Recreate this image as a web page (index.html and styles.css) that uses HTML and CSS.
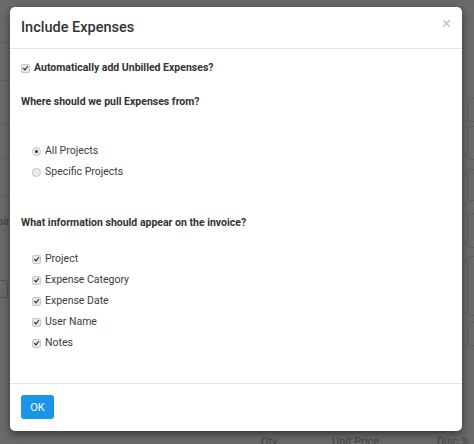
FILE: index.html
```html
<!DOCTYPE html>
<html lang="en">
<head>
    <meta charset="UTF-8">
    <meta name="viewport" content="width=device-width, initial-scale=1.0">
    <title>Include Expenses</title>
    <link rel="stylesheet" href="styles.css">
</head>
<body>
    <!-- Invoice page behind the dimmed backdrop -->
    <div class="page">
        <div class="page-left">
            <div class="rule r1"></div>
            <div class="rule r2"></div>
            <div class="rule r3"></div>
            <div class="rule r4"></div>
            <div class="rule r5"></div>
            <div class="page-label">Poir</div>
            <div class="page-input"></div>
        </div>
        <div class="page-right">
            <div class="field f1"></div>
            <div class="field f2"></div>
            <div class="field f3"></div>
            <div class="field f4"></div>
            <div class="field f5"></div>
            <div class="field f6"></div>
        </div>
        <div class="page-columns">
            <span class="col-qty">Qty</span>
            <span class="col-price">Unit Price</span>
            <span class="col-disc">Disc %</span>
        </div>
    </div>

    <div class="modal">
        <div class="modal-header">
            <h2>Include Expenses</h2>
            <span class="close">&times;</span>
        </div>

        <div class="modal-body">
            <label class="check-row bold">
                <span class="box checked"></span>
                Automatically add Unbilled Expenses?
            </label>

            <p class="question q-source">Where should we pull Expenses from?</p>

            <div class="options radios">
                <label class="check-row">
                    <span class="dot selected"></span>
                    All Projects
                </label>
                <label class="check-row">
                    <span class="dot"></span>
                    Specific Projects
                </label>
            </div>

            <p class="question q-fields">What information should appear on the invoice?</p>

            <div class="options fields" id="fieldList"></div>
        </div>

        <div class="modal-footer">
            <button class="btn-ok">OK</button>
        </div>
    </div>

    <script>
        const fields = ['Project', 'Expense Category', 'Expense Date', 'User Name', 'Notes'];
        const fieldList = document.getElementById('fieldList');

        fields.forEach(name => {
            const row = document.createElement('label');
            row.className = 'check-row';
            row.innerHTML = `<span class="box checked"></span>${name}`;
            fieldList.appendChild(row);
        });
    </script>
</body>
</html>
```

FILE: styles.css
```css
html, body {
    margin: 0;
    padding: 0;
    height: 100%;
    overflow: hidden;
}

body {
    font-family: Roboto, "Liberation Sans", Arial, sans-serif;
    background-color: #6a6a6a;
    color: #333;
}

/* dimmed page */
.page {
    position: relative;
    height: 444px;
}

.page-left .rule {
    position: absolute;
    left: 0;
    width: 12px;
    height: 1px;
    background: #5f5f5f;
}

.r1 { top: 42px; }
.r2 { top: 80px; }
.r3 { top: 123px; }
.r4 { top: 158px; }
.r5 { top: 195px; }

.page-label {
    position: absolute;
    left: -10px;
    top: 215px;
    font-size: 11px;
    color: #3a3a3a;
}

.page-input {
    position: absolute;
    left: -4px;
    top: 280px;
    width: 10px;
    height: 16px;
    border: 1px solid #555;
    border-radius: 3px;
}

.page-right .field {
    position: absolute;
    left: 467px;
    width: 12px;
    border: 1px solid #5c5c5c;
    border-radius: 3px;
}

.f1 { top: 98px; height: 22px; }
.f2 { top: 126px; height: 32px; }
.f3 { top: 169px; height: 30px; }
.f4 { top: 213px; height: 33px; }
.f5 { top: 256px; height: 58px; }
.f6 { top: 322px; height: 22px; }

.page-columns {
    position: absolute;
    top: 435px;
    left: 0;
    width: 100%;
    font-size: 11px;
    color: #444;
}

.page-columns span {
    position: absolute;
}

.col-qty { left: 261px; }
.col-price { left: 332px; }
.col-disc { left: 437px; }

/* modal */
.modal {
    position: absolute;
    top: 7px;
    left: 10px;
    width: 452px;
    background: #fff;
    border-radius: 5px;
    box-shadow: 0 3px 9px rgba(0, 0, 0, 0.5);
}

.modal-header {
    display: flex;
    align-items: center;
    justify-content: space-between;
    height: 41px;
    padding: 0 11px;
    border-bottom: 1px solid #e5e5e5;
}

.modal-header h2 {
    margin: 0;
    font-size: 14.5px;
    font-weight: 500;
    color: #333;
    line-height: 20px;
}

.close {
    font-size: 17px;
    line-height: 20px;
    color: #c4c4c4;
    margin-top: -9px;
    margin-right: 0;
}

.modal-body {
    padding: 9px 11px 30px;
    font-size: 10.5px;
}

.check-row {
    display: flex;
    align-items: center;
    gap: 4px;
    height: 20px;
    line-height: 20px;
    color: #3b3b3b;
}

.bold, .question {
    font-weight: bold;
    color: #333;
}

.question {
    margin: 0;
    height: 20px;
    line-height: 20px;
}

.q-source { margin-top: 14px; }
.q-fields { margin-top: 31px; }

.options {
    padding-left: 11px;
    display: flex;
    flex-direction: column;
    gap: 1px;
}

.radios { margin-top: 29px; }
.fields { margin-top: 16px; }

.box {
    position: relative;
    width: 7px;
    height: 7px;
    border: 1px solid #c8c8c8;
    border-radius: 2px;
    background: #e6e6e6;
}

.box.checked::after {
    content: "";
    position: absolute;
    left: 2px;
    top: 0;
    width: 2px;
    height: 4px;
    border: solid #222;
    border-width: 0 1.5px 1.5px 0;
    transform: rotate(40deg);
}

.dot {
    position: relative;
    width: 7px;
    height: 7px;
    border: 1px solid #c4c4c4;
    border-radius: 50%;
    background: #ececec;
}

.dot.selected::after {
    content: "";
    position: absolute;
    left: 2px;
    top: 2px;
    width: 3px;
    height: 3px;
    border-radius: 50%;
    background: #333;
}

.modal-footer {
    padding: 11px 11px 12px;
    border-top: 1px solid #e5e5e5;
}

.btn-ok {
    width: 33px;
    height: 24px;
    padding: 0;
    border: none;
    border-radius: 3px;
    background: #1a95e8;
    color: #fff;
    font-family: inherit;
    font-size: 11px;
    cursor: pointer;
}
```
